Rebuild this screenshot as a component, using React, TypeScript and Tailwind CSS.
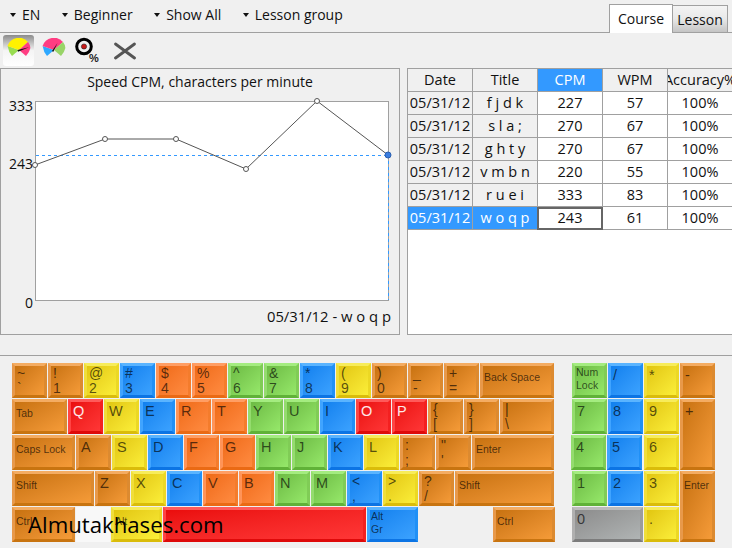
const FONT = "font-['Open_Sans','Noto_Sans',sans-serif]";

const S: Record<string, string> = {
  o: "from-[#c8720f] to-[#f59b38] border-t-[#f4ac62] border-l-[#e8994a] border-r-[#dc8a30] border-b-[#c87410]",
  r: "from-[#ef6a14] to-[#ff8b40] border-t-[#ff9e64] border-l-[#ff9458] border-r-[#f47c2c] border-b-[#ea6a14]",
  y: "from-[#e2c60e] to-[#fbee38] border-t-[#f7ec5a] border-l-[#f0de3a] border-r-[#ecd824] border-b-[#dabc0a]",
  b: "from-[#1080ee] to-[#3ba2ff] border-t-[#5ab4ff] border-l-[#40a4ff] border-r-[#2090f6] border-b-[#0c74e4]",
  g: "from-[#6dbb44] to-[#96e86a] border-t-[#a4ec80] border-l-[#94dc6e] border-r-[#80cc56] border-b-[#60b238]",
  d: "from-[#ea0c0c] to-[#ff3636] border-t-[#ff5a5a] border-l-[#ff4444] border-r-[#f42020] border-b-[#de0a0a]",
  s: "from-[#8c8c8c] to-[#b0b4b4] border-t-[#bcbcbc] border-l-[#b0b0b0] border-r-[#9c9c9c] border-b-[#7c7c7c]",
};

type K = { w?: string; c: string; t?: string; a?: string; small?: boolean; two?: boolean; white?: boolean; shift?: string };

function Key({ w = "w-[35px]", c, t, a, small, two, white, shift = "" }: K) {
  const color = white ? "text-white/90" : "text-black/65";
  return (
    <div className={`${w} ${shift} h-[35px] shrink-0 border-[3px] bg-gradient-to-br font-['Liberation_Sans',sans-serif] ${S[c]} ${color}`}>
      {a ? (
        <div className="flex flex-col pl-[2px] text-[14px] leading-[15px]">
          <span>{a}</span>
          <span>{t}</span>
        </div>
      ) : two ? (
        <div className="pl-[1px] text-[10.5px] leading-[13px] whitespace-pre-line">{t}</div>
      ) : small ? (
        <div className="pl-[1px] pt-[5px] text-[10.5px] leading-[13px] whitespace-nowrap">{t}</div>
      ) : (
        <div className="pl-[2px] text-[14.5px] leading-[18px]">{t}</div>
      )}
    </div>
  );
}

function Row({ children }: { children: React.ReactNode }) {
  return <div className="flex gap-px h-[35px]">{children}</div>;
}

function Keyboard() {
  const r1: K[] = [
    { c: "o", t: "`", a: "~" }, { c: "o", t: "1", a: "!" }, { c: "y", t: "2", a: "@" }, { c: "b", t: "3", a: "#" },
    { c: "r", t: "4", a: "$" }, { c: "r", t: "5", a: "%" }, { c: "g", t: "6", a: "^" }, { c: "g", t: "7", a: "&" },
    { c: "b", t: "8", a: "*" }, { c: "y", t: "9", a: "(" }, { c: "o", t: "0", a: ")" }, { c: "o", t: "-", a: "_" },
    { c: "o", t: "=", a: "+" }, { c: "o", t: "Back Space", small: true, w: "w-[74px]" },
  ];
  const r2: K[] = [
    { c: "o", t: "Tab", small: true, w: "w-[55px]" }, { c: "d", t: "Q", white: true }, { c: "y", t: "W" }, { c: "b", t: "E" },
    { c: "r", t: "R" }, { c: "r", t: "T" }, { c: "g", t: "Y" }, { c: "g", t: "U" }, { c: "b", t: "I" },
    { c: "d", t: "O", white: true }, { c: "d", t: "P", white: true }, { c: "o", t: "[", a: "{" }, { c: "o", t: "]", a: "}" },
    { c: "o", t: "\\", a: "|", w: "w-[54px]" },
  ];
  const r3: K[] = [
    { c: "o", t: "Caps Lock", small: true, w: "w-[63px]" }, { c: "o", t: "A" }, { c: "y", t: "S" }, { c: "b", t: "D" },
    { c: "r", t: "F" }, { c: "r", t: "G" }, { c: "g", t: "H" }, { c: "g", t: "J" }, { c: "b", t: "K" }, { c: "y", t: "L" },
    { c: "o", t: ";", a: ":" }, { c: "o", t: "'", a: '"' }, { c: "o", t: "Enter", small: true, w: "w-[82px]" },
  ];
  const r4: K[] = [
    { c: "o", t: "Shift", small: true, w: "w-[82px]" }, { c: "o", t: "Z" }, { c: "y", t: "X" }, { c: "b", t: "C" },
    { c: "r", t: "V" }, { c: "r", t: "B" }, { c: "g", t: "N" }, { c: "g", t: "M" }, { c: "b", t: ",", a: "<" },
    { c: "y", t: ".", a: ">" }, { c: "o", t: "/", a: "?" }, { c: "o", t: "Shift", small: true, w: "w-[99px]" },
  ];
  return (
    <div className="flex flex-col gap-px w-[543px]">
      {[r1, r2, r3, r4].map((r, i) => (
        <Row key={i}>{r.map((k, j) => <Key key={j} {...k} />)}</Row>
      ))}
      <Row>
        <Key c="o" t="Ctrl" small w="w-[63px]" />
        <div className="w-[34px] h-[35px] shrink-0 bg-[#f8f8f8]" />
        <Key c="y" t="Alt" small w="w-[51px]" />
        <Key c="d" w="w-[203px]" />
        <Key c="b" t={"Alt\nGr"} two w="w-[51px]" />
        <div className="w-[73px] shrink-0" />
        <Key c="o" t="Ctrl" small w="w-[62px]" />
      </Row>
    </div>
  );
}

function Numpad() {
  return (
    <div className="grid grid-cols-[35px_35px_35px_35px] grid-rows-[35px_35px_35px_35px_35px] gap-px ml-[17px]">
      <Key c="g" t={"Num\nLock"} two />
      <Key c="b" t="/" />
      <Key c="y" t="*" />
      <Key c="o" t="-" />
      <Key c="g" t="7" />
      <Key c="b" t="8" />
      <Key c="y" t="9" />
      <div className="row-span-2 h-[71px] flex"><KeyTall t="+" /></div>
      <Key c="g" t="4" shift="-ml-px" />
      <Key c="b" t="5" shift="-ml-px" />
      <Key c="y" t="6" />
      <Key c="g" t="1" />
      <Key c="b" t="2" />
      <Key c="y" t="3" />
      <div className="row-span-2 h-[71px] flex"><KeyTall t="Enter" small /></div>
      <div className="col-span-2"><Key c="s" t="0" w="w-[71px]" /></div>
      <Key c="y" t="." />
    </div>
  );
}

function KeyTall({ t, small }: { t: string; small?: boolean }) {
  return (
    <div className={`w-[35px] h-[71px] border-[3px] bg-gradient-to-br font-['Liberation_Sans',sans-serif] ${S.o} text-black/65`}>
      {small
        ? <div className="pl-[1px] pt-[5px] text-[10.5px] leading-[13px]">{t}</div>
        : <div className="pl-[2px] text-[14.5px] leading-[18px]">{t}</div>}
    </div>
  );
}

function Menu({ label }: { label: string }) {
  return (
    <div className="flex items-center gap-[6px]">
      <span className="w-0 h-0 border-x-[3.5px] border-x-transparent border-t-[4px] border-t-[#111]" />
      <span>{label}</span>
    </div>
  );
}

function Gauge({ a, b, c, needle }: { a: string; b: string; c: string; needle: string }) {
  return (
    <svg width="24" height="20" viewBox="0 0 24 20" className="shrink-0">
      <path d="M12 12 L5 18 Q1.5 14 0.6 8 Z" fill={a} />
      <path d="M12 12 L0.6 8 A11.9 11.9 0 0 1 21 4 Z" fill={b} />
      <path d="M12 12 L21 4 Q23.4 7 23.4 10 Q22.5 14 19 18 Z" fill={c} />
      <path d={needle} fill="#111" />
    </svg>
  );
}

function Toolbar() {
  return (
    <div className="h-[35px] flex items-start pt-[2px] pl-[3px] gap-[8px]">
      <div className="w-[31px] h-[31px] rounded-[3px] bg-gradient-to-b from-[#8c8c8c] via-[#f4f4f4] to-white flex justify-center pt-[3px]">
        <Gauge a="#98dc50" b="#fff200" c="#ff3d82" needle="M10.5 12 L22 9.3 L11 13.8 Z" />
      </div>
      <div className="pt-[3px]">
        <Gauge a="#2ea8ff" b="#ff3d82" c="#98d468" needle="M10 13 L15.5 5 L11.2 14 Z" />
      </div>
      <svg width="27" height="29" viewBox="0 0 27 29" className="shrink-0">
        <circle cx="10" cy="11.5" r="7.3" fill="none" stroke="#000" strokeWidth="3" />
        <circle cx="10" cy="11.5" r="2.6" fill="#c81818" stroke="#222" strokeWidth="0.6" />
        <text x="15" y="27" fontSize="11" fontWeight="700" fill="#222" fontFamily="Liberation Sans, sans-serif">%</text>
      </svg>
      <svg width="22" height="18" viewBox="0 0 22 18" className="mt-[7px] ml-[5px] shrink-0">
        <path d="M1.5 2 L20.5 16 M20.5 2 L1.5 16" fill="none" stroke="#555" strokeWidth="2.8" strokeLinecap="round" />
      </svg>
    </div>
  );
}

function Chart() {
  const pts = [[0, 64], [70, 38], [141, 38], [211, 68], [282, 0], [353, 54]];
  return (
    <div className="w-[400px] h-[267px] border border-[#a0a0a0] flex flex-col">
      <div className="text-center text-[14px] leading-[20px] h-[32px] pt-[3px]">Speed CPM, characters per minute</div>
      <div className="flex">
        <div className="w-[34px] h-[200px] relative text-[14px] leading-[18px]">
          <div className="absolute right-[2px] -top-[4px]">333</div>
          <div className="absolute right-[2px] top-[54px]">243</div>
          <div className="absolute right-[2px] top-[193px]">0</div>
        </div>
        <div className="w-[354px] h-[200px] border border-[#a0a0a0] bg-white relative">
          <svg width="354" height="200" viewBox="0 0 354 200" className="absolute -left-px -top-px overflow-visible">
            <line x1="1" y1="54.5" x2="353" y2="54.5" stroke="#3399ff" strokeDasharray="3 3" />
            <line x1="353.5" y1="54" x2="353.5" y2="199" stroke="#3399ff" strokeDasharray="3 3" />
            <polyline points={pts.map(p => p.join(",")).join(" ")} fill="none" stroke="#555" />
            {pts.slice(0, 5).map((p, i) => (
              <circle key={i} cx={p[0]} cy={p[1]} r="2.5" fill="#fff" stroke="#555" />
            ))}
            <circle cx={353} cy={54} r="3" fill="#3a7de0" stroke="#2a5fb0" />
          </svg>
        </div>
      </div>
      <div className="text-right pr-[8px] text-[14.8px] leading-[18px] pt-[6px]">05/31/12 - w o q p</div>
    </div>
  );
}

const rows = [
  ["f j d k", "227", "57"],
  ["s l a ;", "270", "67"],
  ["g h t y", "270", "67"],
  ["v m b n", "220", "55"],
  ["r u e i", "333", "83"],
  ["w o q p", "243", "61"],
];

function Table() {
  const cell = "w-[65px] shrink-0 border-r border-[#a0a0a0] text-center overflow-hidden whitespace-nowrap";
  return (
    <div className="w-[325px] h-[267px] border-l border-t border-b border-[#a0a0a0] bg-white text-[14.5px]">
      <div className="flex h-[23px] leading-[22px] border-b border-[#a0a0a0] bg-[#f0f0f0]">
        <div className={cell}>Date</div>
        <div className={cell}>Title</div>
        <div className={`${cell} bg-[#3399ff] text-white`}>CPM</div>
        <div className={cell}>WPM</div>
        <div className={`${cell} flex justify-center`}><span className="shrink-0">Accuracy%</span></div>
      </div>
      {rows.map((r, i) => {
        const sel = i === 5;
        const head = sel ? "bg-[#3399ff] text-white" : "bg-[#f0f0f0]";
        return (
          <div key={i} className="flex h-[23px] leading-[22px] border-b border-[#a0a0a0]">
            <div className={`${cell} ${head}`}>05/31/12</div>
            <div className={`${cell} ${head}`}>{r[0]}</div>
            {sel
              ? <div className="w-[66px] h-[23px] -ml-px shrink-0 text-center border-2 border-[#666] leading-[18px] bg-white">{r[1]}</div>
              : <div className={cell}>{r[1]}</div>}
            <div className={cell}>{r[2]}</div>
            <div className={cell}>100%</div>
          </div>
        );
      })}
    </div>
  );
}

export default function App() {
  return (
    <div className={`w-[732px] h-[548px] overflow-hidden bg-[#f0f0f0] text-[#111] relative ${FONT}`}>
      <div className="h-[33px] border-b border-[#a0a0a0] flex text-[14px] relative">
        <div className="flex gap-[21.5px] pl-[10px] pt-[5px] h-[24px] leading-[22px]">
          <Menu label="EN" />
          <Menu label="Beginner" />
          <Menu label="Show All" />
          <Menu label="Lesson group" />
        </div>
        <div className="ml-auto mr-[4px] flex items-end">
          <div className="w-[64px] h-[29px] border border-b-0 border-[#a0a0a0] bg-white text-center leading-[28px] -mb-px">Course</div>
          <div className="w-[56px] h-[27px] -ml-px border border-b-0 border-[#a0a0a0] bg-gradient-to-b from-[#f4f4f4] via-[#e8e8e8] to-[#c4c4c4] text-center leading-[28px]">Lesson</div>
        </div>
      </div>
      <Toolbar />
      <div className="flex justify-between h-[267px]">
        <Chart />
        <Table />
      </div>
      <div className="h-[21px] border-b border-[#a0a0a0]" />
      <div className="flex pl-[12px] pt-[7px] relative">
        <Keyboard />
        <Numpad />
        <div className="absolute left-[28px] top-[153px] text-[22.2px] leading-[32px] text-black">Almutakhases.com</div>
      </div>
    </div>
  );
}
